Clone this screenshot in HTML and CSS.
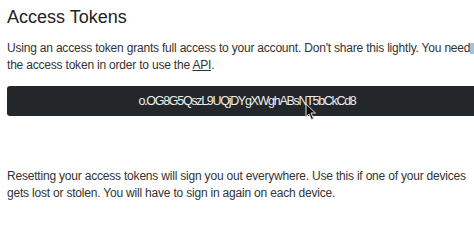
FILE: index.html
```html
<!DOCTYPE html>
<html>
<head>
<meta charset="utf-8">
<link rel="stylesheet" href="styles.css">
</head>
<body>
<div class="page">
  <h1 class="title">Access Tokens</h1>
  <p class="text">Using an access token grants full access to your account. Don't share this lightly. You need<span class="sel"></span> the access token in order to use the <a class="link" href="#">API</a>.</p>
  <div class="token-wrap">
    <div class="token">o.OG8G5QszL9UQjDYgXWghABsNT5bCkCd8</div>
    <svg class="cursor" width="12" height="18" viewBox="0 0 12 18"><path d="M1 1 L1 14 L4 11 L6.5 16.5 L8.5 15.5 L6 10 L10.5 10 Z" fill="#111" stroke="#ddd" stroke-width="1"/></svg>
  </div>
  <p class="text reset">Resetting your access tokens will sign you out everywhere. Use this if one of your devices gets lost or stolen. You will have to sign in again on each device.</p>
</div>
</body>
</html>
```
FILE: styles.css
```css
html, body {
  margin: 0;
  padding: 0;
  background: #fff;
  overflow: hidden;
}
body {
  width: 474px;
  height: 200px;
  font-family: "Liberation Sans", Arial, sans-serif;
  color: #333;
}
.page {
  width: 480px;
  padding: 0 0 0 7px;
}
.title {
  margin: 0;
  padding-top: 6px;
  font-size: 18px;
  font-weight: normal;
  line-height: 22px;
  color: #222;
}
.text {
  margin: 12px 0 0;
  font-size: 12px;
  letter-spacing: -0.2px;
  line-height: 17px;
}
.link {
  color: #333;
  text-decoration: underline;
}
.sel {
  display: inline-block;
  width: 4px;
  height: 11px;
  vertical-align: -2px;
  background: #9fc3e3;
}
.token-wrap {
  position: relative;
  margin-top: 12px;
}
.token {
  height: 30px;
  line-height: 30px;
  background: #232729;
  border-radius: 3px;
  color: #eee;
  font-size: 12.5px;
  letter-spacing: -1.3px;
  text-align: center;
}
.cursor {
  position: absolute;
  left: 298px;
  top: 17px;
}
.reset {
  margin-top: 52px;
}
```
